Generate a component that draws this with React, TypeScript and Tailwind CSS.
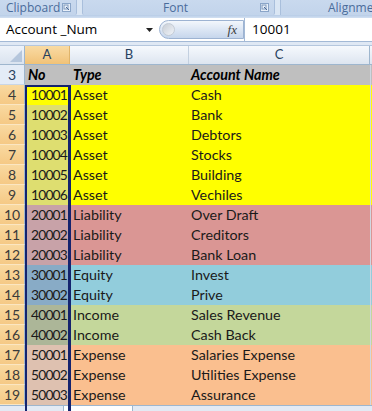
import React from "react";

type Row = { n: number; no: string; type: string; name: string; bg: string; tint: string };

const rows: Row[] = [
  { n: 4, no: "10001", type: "Asset", name: "Cash", bg: "bg-[#ffff00]", tint: "bg-[#ffff00]" },
  { n: 5, no: "10002", type: "Asset", name: "Bank", bg: "bg-[#ffff00]", tint: "bg-[#dede70]" },
  { n: 6, no: "10003", type: "Asset", name: "Debtors", bg: "bg-[#ffff00]", tint: "bg-[#dede70]" },
  { n: 7, no: "10004", type: "Asset", name: "Stocks", bg: "bg-[#ffff00]", tint: "bg-[#dede70]" },
  { n: 8, no: "10005", type: "Asset", name: "Building", bg: "bg-[#ffff00]", tint: "bg-[#dede70]" },
  { n: 9, no: "10006", type: "Asset", name: "Vechiles", bg: "bg-[#ffff00]", tint: "bg-[#dede70]" },
  { n: 10, no: "20001", type: "Liability", name: "Over Draft", bg: "bg-[#da9694]", tint: "bg-[#c8a2a8]" },
  { n: 11, no: "20002", type: "Liability", name: "Creditors", bg: "bg-[#da9694]", tint: "bg-[#c8a2a8]" },
  { n: 12, no: "20003", type: "Liability", name: "Bank Loan", bg: "bg-[#da9694]", tint: "bg-[#c8a2a8]" },
  { n: 13, no: "30001", type: "Equity", name: "Invest", bg: "bg-[#92cddc]", tint: "bg-[#88abc6]" },
  { n: 14, no: "30002", type: "Equity", name: "Prive", bg: "bg-[#92cddc]", tint: "bg-[#88abc6]" },
  { n: 15, no: "40001", type: "Income", name: "Sales Revenue", bg: "bg-[#c4d79b]", tint: "bg-[#acb698]" },
  { n: 16, no: "40002", type: "Income", name: "Cash Back", bg: "bg-[#c4d79b]", tint: "bg-[#acb698]" },
  { n: 17, no: "50001", type: "Expense", name: "Salaries Expense", bg: "bg-[#fabf8f]", tint: "bg-[#dec1b0]" },
  { n: 18, no: "50002", type: "Expense", name: "Utilities Expense", bg: "bg-[#fabf8f]", tint: "bg-[#dec1b0]" },
  { n: 19, no: "50003", type: "Expense", name: "Assurance", bg: "bg-[#fabf8f]", tint: "bg-[#dec1b0]" },
];

function Launcher() {
  return (
    <svg width="9" height="9" viewBox="0 0 9 9" className="shrink-0">
      <rect x="0.5" y="0.5" width="8" height="8" fill="#e9f0f9" stroke="#8aa5c8" />
      <rect x="2" y="2" width="4" height="4" fill="none" stroke="#7d97bb" />
      <path d="M4 4 L7 7" stroke="#4e6c98" strokeWidth="1" />
    </svg>
  );
}

export default function App() {
  const cellFont = { fontFamily: "Lato, 'Open Sans', sans-serif" };
  const uiFont = { fontFamily: "'Open Sans', 'Noto Sans', sans-serif" };
  return (
    <div className="w-[372px] h-[411px] overflow-hidden bg-white relative" style={cellFont}>
      {/* Ribbon group labels */}
      <div className="h-[15px] flex bg-[#dae6f4] text-[12px] text-[#4a6c9b]" style={uiFont}>
        <div className="w-[77px] flex items-center justify-between pl-[6px] pr-[5px] bg-gradient-to-b from-[#c9d9ee] to-[#c2d4eb] rounded-br-[2px] border-r border-[#a9bfdc]">
          <span className="leading-none">Clipboard</span>
          <Launcher />
        </div>
        <div className="w-[5px]" />
        <div className="w-[193px] flex items-center justify-between pl-[8px] pr-[5px] bg-gradient-to-b from-[#c9d9ee] to-[#c2d4eb] rounded-b-[2px] border-x border-[#a9bfdc]">
          <span className="flex-1 text-center leading-none">Font</span>
          <Launcher />
        </div>
        <div className="w-[5px]" />
        <div className="flex-1 flex items-center pl-[47px] overflow-hidden whitespace-nowrap bg-gradient-to-b from-[#c9d9ee] to-[#c2d4eb] border-l border-[#a9bfdc]">
          <span className="leading-none">Alignment</span>
        </div>
      </div>
      <div className="h-[3px] bg-gradient-to-b from-[#b6cbe6] to-[#d3e1f2]" />
      {/* Formula bar */}
      <div className="h-[24px] flex bg-white border-b border-[#a3b9d6]">
        <div className="w-[159px] flex items-center justify-between pl-[6px] pr-[6px] text-[13.5px] text-black">
          <span style={uiFont}>Account _Num</span>
          <svg width="7" height="4" viewBox="0 0 7 4"><path d="M0 0 H7 L3.5 4 Z" fill="#222" /></svg>
        </div>
        <div className="w-[85px] flex items-center">
          <div className="h-[19px] w-full rounded-l-full bg-gradient-to-b from-[#f3f7fc] to-[#c6d6ec] border border-[#9db3d2] flex items-center justify-between pl-[2px] pr-[6px]">
            <div className="w-[13px] h-[13px] rounded-full bg-gradient-to-br from-[#c9ced6] to-[#f0f4f9] border border-[#c4ccd6]" />
            <span className="italic text-[13px] text-[#3d3d3d]" style={{ fontFamily: "'Liberation Serif', serif" }}>fx</span>
          </div>
        </div>
        <div className="flex-1 border-l border-[#a3b9d6] flex items-center pl-[7px] text-[13.5px] text-black">
          <span style={uiFont}>10001</span>
        </div>
      </div>
      <div className="h-[4px] bg-[#dfe8f4] border-b border-[#b5c7de]" />
      {/* Column headers */}
      <div className="h-[19px] flex text-[13px] text-[#27415f] border-b border-[#9eb6ce]">
        <div className="w-[25px] relative bg-gradient-to-b from-[#eef3fa] to-[#dae3ef] border-r border-[#9eb6ce]">
          <svg className="absolute right-[2px] bottom-[2px]" width="12" height="12" viewBox="0 0 12 12"><path d="M12 0 V12 H0 Z" fill="#b5c6dc" /></svg>
        </div>
        <div className="w-[45px] flex items-center justify-center bg-gradient-to-b from-[#f9dba4] to-[#f1c277] border-r border-[#e0b46a]">A</div>
        <div className="w-[119px] flex items-center justify-center bg-gradient-to-b from-[#f6f9fd] to-[#dde5f0] border-r border-[#c3d0e0]">B</div>
        <div className="w-[181px] flex items-center justify-center bg-gradient-to-b from-[#f6f9fd] to-[#dde5f0] border-r border-[#9eb6ce]">C</div>
        <div className="flex-1 bg-gradient-to-b from-[#f6f9fd] to-[#dde5f0]" />
      </div>
      {/* Row 3 */}
      <div className="h-[20px] flex text-[14.3px]">
        <div className="w-[25px] flex items-center justify-center bg-[#e4ecf7] text-[#27415f] text-[14px] border-r border-[#9eb6ce] border-b border-b-[#c9d6e6]">3</div>
        <div className="w-[45px] flex items-center pl-[3px] bg-[#bfbfbf] font-bold italic text-black">No</div>
        <div className="w-[119px] flex items-center pl-[3px] bg-[#bfbfbf] font-bold italic text-black">Type</div>
        <div className="w-[181px] flex items-center pl-[2px] bg-[#bfbfbf] font-bold italic text-black">Account Name</div>
        <div className="flex-1 bg-[#bfbfbf] border-l border-[#d0d7e2]" />
      </div>
      {/* Data rows */}
      <div className="relative">
        {rows.map((r) => (
          <div key={r.n} className="h-[20px] flex text-[14.3px] text-[#1a1a1a]">
            <div className="w-[25px] flex items-center justify-center bg-gradient-to-b from-[#f9d9a0] to-[#f5c985] text-[#3a3a3a] text-[14px] border-r border-[#9eb6ce] border-b border-b-[#fbe6c2]">{r.n}</div>
            <div className={`w-[45px] flex items-center justify-end pr-[3px] text-[13.8px] tracking-[-0.8px] ${r.tint}`}>{r.no}</div>
            <div className={`w-[119px] flex items-center pl-[3px] ${r.bg}`}>{r.type}</div>
            <div className={`w-[181px] flex items-center pl-[2px] ${r.bg}`}>{r.name}</div>
            <div className={`flex-1 ${r.bg} border-l border-[#d0d7e2]`} />
          </div>
        ))}
        {/* selection outline */}
        <div className="absolute left-[25px] top-0 w-[46px] h-[330px] border-l-2 border-t-2 border-r-[3px] border-[#14236e] pointer-events-none" />
      </div>
      {/* bottom strip */}
      <div className="h-[6px] flex bg-[#e3eaf4] border-t border-[#9eb6ce]">
        <div className="w-[63px]" />
        <div className="w-[70px] bg-white border-x border-[#9eb6ce]" />
      </div>
    </div>
  );
}
